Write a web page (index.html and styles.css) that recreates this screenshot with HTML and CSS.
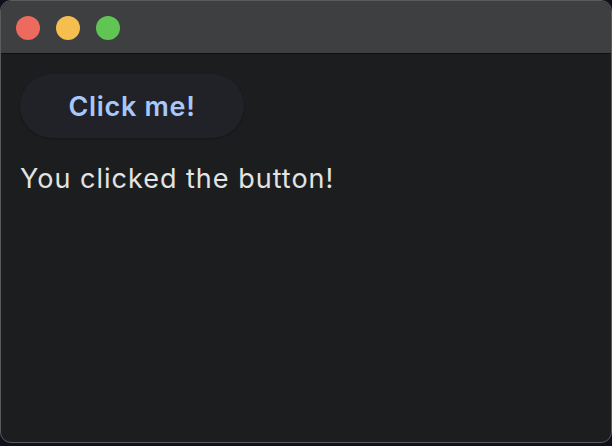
FILE: index.html
```html
<!DOCTYPE html>
<html>
<head>
<meta charset="utf-8">
<link rel="stylesheet" href="styles.css">
</head>
<body>
<div class="window">
  <div class="titlebar">
    <span class="light red"></span>
    <span class="light yellow"></span>
    <span class="light green"></span>
  </div>
  <div class="content">
    <button class="btn">Click me!</button>
    <p class="msg">You clicked the button!</p>
  </div>
</div>
</body>
</html>
```
FILE: styles.css
```css
html, body {
  margin: 0;
  padding: 0;
  width: 612px;
  height: 446px;
  background: #120f1c;
  overflow: hidden;
}
.window {
  width: 612px;
  height: 443px;
  box-sizing: border-box;
  border: 1px solid #5b5b5e;
  border-radius: 11px;
  overflow: hidden;
  background: #1c1d1f;
  display: flex;
  flex-direction: column;
}
.titlebar {
  height: 52px;
  background: #3e3f41;
  border-bottom: 1px solid #0f0f10;
  display: flex;
  align-items: center;
  gap: 16px;
  padding: 0 0 0 15px;
  flex-shrink: 0;
}
.light {
  width: 24px;
  height: 24px;
  border-radius: 50%;
  display: block;
  margin-top: 2px;
}
.red { background: #ec6a5e; }
.yellow { background: #f4bf4f; }
.green { background: #61c554; }
.content {
  padding: 20px 0 0 19px;
  display: flex;
  flex-direction: column;
  align-items: flex-start;
}
.btn {
  width: 224px;
  height: 64px;
  border: none;
  border-radius: 32px;
  background: #202227;
  color: #a8c7fa;
  font-family: Inter, "Noto Sans", sans-serif;
  font-weight: 600;
  font-size: 27px;
  letter-spacing: 0.7px;
  padding: 0;
  box-shadow: 0 1px 2px rgba(0,0,0,0.25);
}
.msg {
  margin: 24px 0 0 0;
  color: #e3e3e3;
  font-family: Inter, "Noto Sans", sans-serif;
  font-size: 27px;
  letter-spacing: 1px;
  line-height: 34px;
}
```
